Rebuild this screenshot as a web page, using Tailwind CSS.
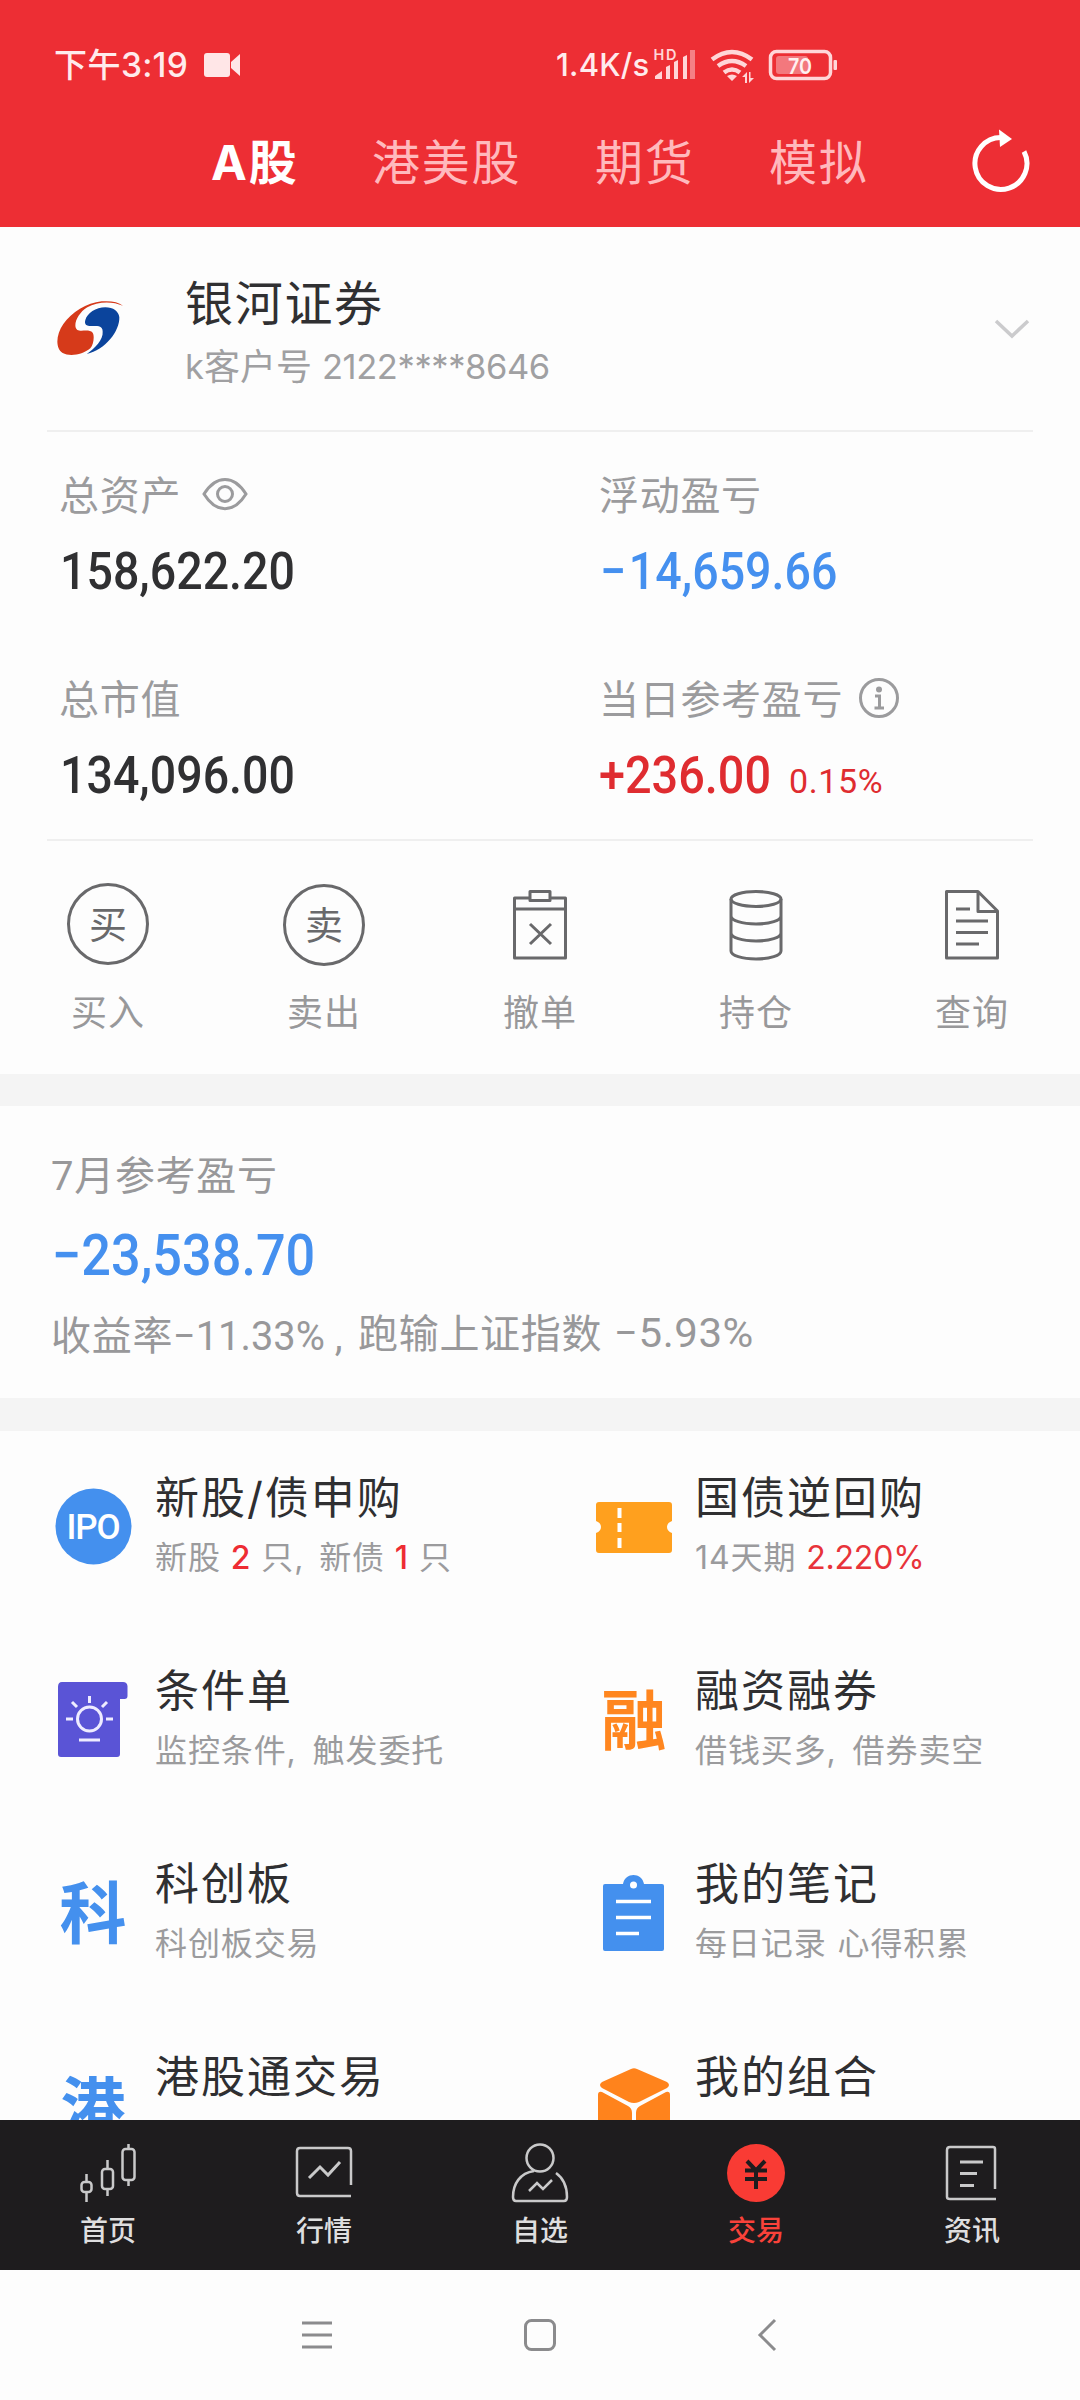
<!DOCTYPE html>
<html lang="zh-CN">
<head>
<meta charset="utf-8">
<title>交易</title>
<script src="https://cdn.jsdelivr.net/npm/@tailwindcss/browser@4"></script>
</head>
<body class="bg-[#fdfdfd]">
<div class="w-[1080px] h-[2400px] flex flex-col overflow-hidden bg-[#fdfdfd] text-[#303032] font-['Inter','Noto_Sans_CJK_SC',sans-serif] whitespace-nowrap">

  <!-- header -->
  <header class="h-[227px] shrink-0 bg-[#ed2e34] text-white flex flex-col">
    <div class="h-[129px] flex items-center pl-[54px] text-[#ffebec]">
      <div class="w-[147px] text-[33px] leading-[40px] font-medium flex items-center"><span class="tracking-[0.500px]">下午</span><span class="text-[33.500px] tracking-[0.200px]">3:19</span></div>
      <svg class="ml-[3px]" width="38" height="26" viewBox="0 0 38 26" fill="#ffe6e7"><rect x="0" y="1" width="26" height="24" rx="3"/><path d="M27 10 36 2v22l-9-8z"/></svg>
      <div class="ml-[314px] w-[95px] text-[31px] leading-[40px] font-medium tracking-[0.200px]">1.4K/s</div>
      <svg width="186" height="40" viewBox="651 44 186 40" fill="#ffd6d8">
        <text x="653.500" y="59" font-size="14.500" font-weight="600" textLength="23">HD</text>
        <path d="M655 78v-3l7-5v8zM666 66l4-2v14h-4zM674 61l4-2v19h-4z"/><path d="M683 56l4-2v24h-4z"/>
        <rect x="690" y="49" width="5" height="29" fill="#f58085"/>
        <g fill="none" stroke="#ffd6d8" stroke-width="4.500"><path d="M712 58.500q20-15 40 0M718 65q14-10 28 0M724 71.500q8-6 16 0"/></g>
        <path d="M727 75q5-3 10 0l-5 5zM742 76l5-5v11h-2v-6zM749 71h1.500v6h3.500l-5 5z"/>
        <rect x="770.500" y="50.500" width="60" height="27" rx="6" fill="none" stroke="#ffd6d8" stroke-width="3.500"/>
        <rect x="776" y="55" width="32" height="18" rx="3" fill="#f3787d"/>
        <rect x="833.500" y="59" width="3.500" height="10" rx="1"/>
        <text x="788" y="72.500" font-size="22" font-weight="600" textLength="24" lengthAdjust="spacingAndGlyphs" fill="#fff0f0">70</text>
      </svg>
    </div>
    <nav class="h-[68px] flex items-center text-[48px] leading-[68px] tracking-[1.700px] text-[#ffb9bd]">
      <span class="ml-[211px] w-[161px] font-bold text-white tracking-normal"><span class="text-[48px] mr-[2px]">A</span>股</span>
      <span class="w-[223px]">港美股</span>
      <span class="w-[174px]">期货</span>
      <span class="w-[200px]">模拟</span>
      <svg width="66" height="68" viewBox="969 127 66 68" fill="none" stroke="#fff" stroke-width="5"><path d="M1024 149.500A26 26 0 1 1 1001 135.500"/><path d="M999 127.500l13 9.500-12 8z" fill="#fff" stroke="none"/></svg>
    </nav>
  </header>

  <!-- account -->
  <section class="mx-[47px] h-[205px] shrink-0 border-b-2 border-[#efefef] flex">
    <svg class="mt-[72px] ml-[8px]" width="68" height="64" viewBox="45 57 204 192"><path d="M250 78C235 66 215 62 185 64 140 68 95 97 70 132 48 163 45 205 68 219c20 11 60 6 83-14 10-10 13-38 7-47-10-12-35-2-46-8-15-12 0-50 30-68 30-18 75-20 108-4z" fill="#d63a1a"/><path d="M140 222C165 205 190 178 188 155c0-18-15-17-30-17-18 1-26-4-22-18 5-20 32-38 60-38 24 0 40 12 42 30 1 42-42 98-98 110z" fill="#0b449c"/></svg>
    <div class="ml-[62px] pt-[41px] flex flex-col">
      <div class="h-[72px] text-[48px] leading-[72px] tracking-[1.700px]">银河证券</div>
      <div class="h-[54px] text-[34.500px] leading-[54px] text-[#a0a0a2] flex"><span>k</span><span class="text-[36px]">客户号</span><span class="ml-[10px] tracking-[-0.400px]">2122****8646</span></div>
    </div>
    <svg class="ml-auto mr-[3px] mt-[91px]" width="36" height="22" viewBox="0 0 36 22" fill="none" stroke="#cbcbcd" stroke-width="3.500"><path d="M2 3l16 15L34 3"/></svg>
  </section>

  <!-- figures -->
  <section class="mx-[47px] h-[409px] shrink-0 border-b-2 border-[#efefef] grid grid-cols-[540px_1fr] grid-rows-[204px_1fr] pl-[12px] pt-[34px]">
    <div>
      <div class="h-[60px] flex items-center text-[40px] tracking-[0.700px] text-[#9b9b9d]">总资产
        <svg class="ml-[21px] -translate-y-[2px]" width="46" height="34" viewBox="0 0 46 34" fill="none" stroke="#9b9b9d" stroke-width="3"><path d="M2 17C14-2.500 32-2.500 44 17 32 36.500 14 36.500 2 17z"/><circle cx="23" cy="17" r="7.500"/></svg></div>
      <div class="mt-[16px] ml-px h-[60px] text-[52px] leading-[60px] font-['Roboto'] font-medium origin-left scale-x-[0.895] w-fit">158,622.20</div>
    </div>
    <div>
      <div class="h-[60px] flex items-center text-[40px] tracking-[0.700px] text-[#9b9b9d]">浮动盈亏</div>
      <div class="mt-[16px] ml-px h-[60px] text-[52px] leading-[60px] font-['Roboto'] font-medium text-[#4590ef] origin-left scale-x-[0.895] w-fit"><span class="mr-[3px]">−</span>14,659.66</div>
    </div>
    <div>
      <div class="h-[60px] flex items-center text-[40px] tracking-[0.700px] text-[#9b9b9d]">总市值</div>
      <div class="mt-[16px] ml-px h-[60px] text-[52px] leading-[60px] font-['Roboto'] font-medium origin-left scale-x-[0.895] w-fit">134,096.00</div>
    </div>
    <div>
      <div class="h-[60px] flex items-center text-[40px] tracking-[0.700px] text-[#9b9b9d]">当日参考盈亏
        <svg class="ml-[15px] -translate-y-[2px]" width="42" height="42" viewBox="0 0 42 42" fill="none" stroke="#9b9b9d" stroke-width="3"><circle cx="21" cy="21" r="18.500"/><circle cx="21" cy="12.500" r="3" fill="#9b9b9d" stroke="none"/><path d="M17 19h4.500v11M16.500 31h9.500"/></svg></div>
      <div class="mt-[16px] h-[60px] flex text-[#df2c30] font-['Roboto'] leading-[60px]"><span class="w-[190px]"><span class="inline-block text-[52px] font-medium origin-left scale-x-[0.900]">+236.00</span></span><span class="text-[34px] leading-[70px] tracking-[0.600px]">0.15%</span></div>
    </div>
  </section>

  <!-- actions -->
  <section class="h-[233px] shrink-0 grid grid-cols-5 pt-[42px] text-[36px] leading-[54px] tracking-[1px] text-[#98989a]">
    <div class="flex flex-col items-center"><span class="size-[82px] rounded-full border-3 border-[#69696b] text-[#69696b] flex items-center justify-center text-[38px] tracking-normal leading-none">买</span><span class="mt-[21px]">买入</span></div>
    <div class="flex flex-col items-center"><span class="size-[82px] translate-y-px rounded-full border-3 border-[#69696b] text-[#69696b] flex items-center justify-center text-[38px] tracking-normal leading-none">卖</span><span class="mt-[21px]">卖出</span></div>
    <div class="flex flex-col items-center"><svg width="82" height="82" viewBox="0 0 82 82" fill="none" stroke="#69696b" stroke-width="3"><path d="M31 15H15.500v60h51V15H52M15.500 26h51M31 8.500h20v9H31zM31 41l21 20M52 41L31 61" stroke-linejoin="round"/></svg><span class="mt-[21px]">撤单</span></div>
    <div class="flex flex-col items-center"><svg width="82" height="82" viewBox="0 0 82 82" fill="none" stroke="#69696b" stroke-width="3"><ellipse cx="41" cy="16" rx="25" ry="7.500"/><path d="M16 16v52c0 4.500 11 8 25 8s25-3.500 25-8V16M16 33c0 4.500 11 8 25 8s25-3.500 25-8M16 50c0 4.500 11 8 25 8s25-3.500 25-8"/></svg><span class="mt-[21px]">持仓</span></div>
    <div class="flex flex-col items-center"><svg width="82" height="82" viewBox="0 0 82 82" fill="none" stroke="#69696b" stroke-width="3" stroke-linejoin="round"><path d="M15.500 8.500H47l19.500 19.500v47h-51zM47 8.500v20h19M25 26h14M25 38h32M25 49.500h32M25 61h23"/></svg><span class="mt-[21px]">查询</span></div>
  </section>
  <div class="h-[32px] shrink-0 bg-[#f4f4f4]"></div>

  <!-- monthly -->
  <section class="h-[292px] shrink-0 pl-[51px] pt-[40px] text-[#98989a]">
    <div class="h-[60px] text-[40px] leading-[60px] tracking-[0.700px]"><span class="font-['Roboto']">7</span>月参考盈亏</div>
    <div class="mt-[19px] ml-px h-[60px] text-[58px] leading-[60px] font-['Roboto'] font-medium text-[#4590ef] origin-left scale-x-[0.900] w-fit">−23,538.70</div>
    <div class="mt-[19px] h-[60px] flex items-center text-[40px] leading-[60px] tracking-[0.700px]"><span class="w-[307px] translate-y-[2px]">收益率<span class="font-['Roboto'] tracking-normal inline-block origin-left scale-x-[0.995]">−11.33% ,</span></span><span>跑输上证指数</span><span class="ml-[12px] font-['Roboto'] inline-block origin-left scale-x-[1.050] tracking-[0.500px]">−5.93%</span></div>
  </section>
  <div class="h-[33px] shrink-0 bg-[#f4f4f4]"></div>

  <!-- services -->
  <section class="h-[689px] shrink-0 overflow-hidden grid grid-cols-2 auto-rows-[193px] text-[#2f2f31]">
    <div class="flex pl-[53px]">
      <svg class="mt-[55px] w-[80px]" height="80" viewBox="0 0 80 80"><circle cx="40.500" cy="40.500" r="38" fill="#4490ee"/><text x="13.500" y="53" font-family="Roboto" font-size="35" font-weight="500" fill="#fff" textLength="54">IPO</text></svg>
      <div class="ml-[22px] pt-[34px]"><div class="text-[44px] leading-[66px] tracking-[2px]">新股/债申购</div><div class="mt-[3px] text-[32px] leading-[48px] tracking-[0.900px] text-[#9b9b9d]">新股 <b class="font-medium text-[#ee2c33]">2</b> 只<span class="inline-block w-[25px]">,</span>新债 <b class="font-medium text-[#ee2c33]">1</b> 只</div></div>
    </div>
    <div class="flex pl-[53px]">
      <svg class="mt-[55px] w-[80px]" height="80" viewBox="0 0 80 80"><path d="M6 16h70q3 0 3 3v16q-5 2-5 6t5 6v17q0 3-3 3H6q-3 0-3-3V47q5-2 5-6t-5-6V19q0-3 3-3z" fill="#ffa01e"/><path d="M26.500 22v10M26.500 37v9M26.500 52v10" stroke="#fff" stroke-width="4"/></svg>
      <div class="ml-[22px] pt-[34px]"><div class="text-[44px] leading-[66px] tracking-[2px]">国债逆回购</div><div class="mt-[3px] text-[32px] leading-[48px] tracking-[0.900px] text-[#9b9b9d]">14天期 <span class="text-[#e8333a] tracking-[-0.200px]">2.220%</span></div></div>
    </div>
    <div class="flex pl-[53px]">
      <svg class="mt-[55px] w-[80px]" height="80" viewBox="0 0 80 80"><path d="M9 3h61q4 0 4.500 4v10q0 3-3 3H67v55q0 3-3 3H8q-3 0-3-3V8q0-5 4-5z" fill="#5a54d6"/><g fill="none" stroke="#eeecff" stroke-width="3"><circle cx="36.500" cy="40" r="12"/><path d="M36.500 17v7M19 23l5 5M54 23l-5 5M13 40h7M53 40h7M26 61h21"/></g></svg>
      <div class="ml-[22px] pt-[34px]"><div class="text-[44px] leading-[66px] tracking-[2px]">条件单</div><div class="mt-[3px] text-[32px] leading-[48px] tracking-[0.900px] text-[#9b9b9d]">监控条件<span class="inline-block w-[26px]">,</span>触发委托</div></div>
    </div>
    <div class="flex pl-[53px]">
      <div class="mt-[56px] w-[82px] h-[80px] flex items-center justify-center text-[65px] leading-none font-bold text-[#ff861f]">融</div>
      <div class="ml-[20px] pt-[34px]"><div class="text-[44px] leading-[66px] tracking-[2px]">融资融券</div><div class="mt-[3px] text-[32px] leading-[48px] tracking-[0.900px] text-[#9b9b9d]">借钱买多<span class="inline-block w-[26px]">,</span>借券卖空</div></div>
    </div>
    <div class="flex pl-[53px]">
      <div class="mt-[56px] w-[80px] h-[80px] flex items-center justify-center text-[67px] leading-none font-bold text-[#4490ee]">科</div>
      <div class="ml-[22px] pt-[34px]"><div class="text-[44px] leading-[66px] tracking-[2px]">科创板</div><div class="mt-[3px] text-[32px] leading-[48px] tracking-[0.900px] text-[#9b9b9d]">科创板交易</div></div>
    </div>
    <div class="flex pl-[53px]">
      <svg class="mt-[55px] w-[80px]" height="80" viewBox="0 0 80 80"><path d="M12 12h18C32 0 49 0 51 12h18q2 0 2 2v63q0 2-2 2H12q-2 0-2-2V14q0-2 2-2z" fill="#4490ee"/><circle cx="40.500" cy="13" r="3.500" fill="#fff"/><path d="M23 29.500h35M23 45.500h35M23 61.500h23" stroke="#fff" stroke-width="3.500"/></svg>
      <div class="ml-[22px] pt-[34px]"><div class="text-[44px] leading-[66px] tracking-[2px]">我的笔记</div><div class="mt-[3px] text-[32px] leading-[48px] tracking-[0.900px] text-[#9b9b9d]">每日记录 <span class="ml-px">心得积累</span></div></div>
    </div>
    <div class="flex pl-[53px]">
      <div class="mt-[57px] w-[80px] h-[80px] flex items-center justify-center text-[65px] leading-none font-bold text-[#4490ee]">港</div>
      <div class="ml-[22px] pt-[34px]"><div class="text-[44px] leading-[66px] tracking-[2px]">港股通交易</div></div>
    </div>
    <div class="flex pl-[53px]">
      <svg class="mt-[55px] w-[80px]" height="80" viewBox="0 0 80 80" fill="#ff831c"><path d="M38 4q3-1.500 6 0l30 13q4 3 0 6L46 37q-5 2-10 0L9 23q-4-3 0-6zM9 27q-4-1-4 3v44h34V48q0-5-4-7zM73 27q4-1 4 3v44H43V48q0-5 4-7z"/></svg>
      <div class="ml-[22px] pt-[34px]"><div class="text-[44px] leading-[66px] tracking-[2px]">我的组合</div></div>
    </div>
  </section>

  <!-- tab bar -->
  <nav class="h-[150px] shrink-0 bg-[#1e1c1e] grid grid-cols-5 pt-[23px] text-[28px] leading-[42px] font-medium text-[#dededf]">
    <div class="flex flex-col items-center"><svg width="60" height="60" viewBox="0 0 60 60" fill="none" stroke="#c9c9ca" stroke-width="2.500"><rect x="3.500" y="39" width="10" height="10" rx="3"/><rect x="24" y="26" width="11" height="20" rx="3"/><rect x="44.500" y="6" width="12" height="31" rx="3"/><path d="M8.500 31v8M8.500 49v10M29.500 17v9M29.500 46v7M50.500 1v5M50.500 37v6"/></svg><span class="mt-[7px]">首页</span></div>
    <div class="flex flex-col items-center"><svg width="60" height="60" viewBox="0 0 60 60" fill="none" stroke="#c9c9ca" stroke-width="2.500"><path d="M57 42V8q0-3-3-3H6Q3 5 3 8v42q0 3 3 3h51"/><path d="M15 35l11-11 8 8 12-13" stroke-width="3"/></svg><span class="mt-[7px]">行情</span></div>
    <div class="flex flex-col items-center"><svg width="60" height="60" viewBox="0 0 60 60" fill="none" stroke="#c9c9ca" stroke-width="2.500"><circle cx="30" cy="15" r="13.500"/><path d="M24 28C10 30 3 41 3 54q0 4 3 4h48q3 0 3-4c0-11-4-19-11-24"/><path d="M19 48l8-8 6 6 9-9"/></svg><span class="mt-[7px]">自选</span></div>
    <div class="flex flex-col items-center text-[#f9423a]"><svg width="60" height="60" viewBox="0 0 60 60"><circle cx="30" cy="30" r="29" fill="#f93b34"/><path d="M21 18l9 9.500 9-9.500M19 27.500h22M19 36h22M30 27v19" fill="none" stroke="#1e1c1e" stroke-width="4"/></svg><span class="mt-[7px]">交易</span></div>
    <div class="flex flex-col items-center"><svg width="60" height="60" viewBox="0 0 60 60" fill="none" stroke="#c9c9ca" stroke-width="2.500"><path d="M53 46V6q0-2-2-2H8Q5 4 5 7v47q0 2 3 2h46"/><path d="M18 19h23M18 30.500h17M18 42.500h14" stroke-width="3"/></svg><span class="mt-[7px]">资讯</span></div>
  </nav>

  <!-- system navigation -->
  <div class="h-[130px] shrink-0 bg-[#fdfdfd] flex items-start pt-[48px] pl-[300px]">
    <svg width="34" height="34" viewBox="0 0 34 34" stroke="#8b8b8d" stroke-width="3"><path d="M2 5h30M2 17h30M2 29h30"/></svg>
    <svg class="ml-[189px]" width="34" height="34" viewBox="0 0 34 34" fill="none" stroke="#8b8b8d" stroke-width="3"><rect x="2.500" y="2.500" width="29" height="29" rx="6"/></svg>
    <svg class="ml-[200px]" width="20" height="34" viewBox="0 0 20 34" fill="none" stroke="#8b8b8d" stroke-width="3"><path d="M18 2L3 17l15 15"/></svg>
  </div>
</div>
</body>
</html>
